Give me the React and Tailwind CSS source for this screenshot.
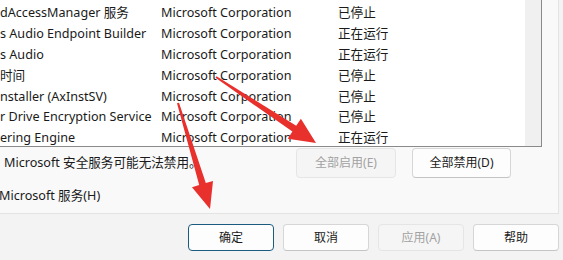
import React from "react";

const rows = [
  ["dAccessManager 服务", "Microsoft Corporation", "已停止"],
  ["s Audio Endpoint Builder", "Microsoft Corporation", "正在运行"],
  ["s Audio", "Microsoft Corporation", "正在运行"],
  ["时间", "Microsoft Corporation", "已停止"],
  ["nstaller (AxInstSV)", "Microsoft Corporation", "已停止"],
  ["r Drive Encryption Service", "Microsoft Corporation", "已停止"],
  ["ering Engine", "Microsoft Corporation", "正在运行"],
];

function Btn({ children, w = "w-[86px]", h = "h-[27px]", variant = "normal" }) {
  const base = `${w} ${h} flex items-center justify-center rounded-[4px] text-[12px] `;
  if (variant === "primary")
    return (
      <div className={base + "bg-[#fdfdfd] border border-[#1c5b80] text-[#1a1a1a]"}>{children}</div>
    );
  if (variant === "disabled")
    return (
      <div className={base + "bg-[#f5f5f5] border border-[#e5e5e5] text-[#a2a2a2]"}>{children}</div>
    );
  return (
    <div className={base + "bg-[#fdfdfd] border border-[#d6d6d6] border-b-[#c4c4c4] text-[#1a1a1a]"}>{children}</div>
  );
}

export default function App() {
  return (
    <div
      className="relative w-[563px] h-[260px] overflow-hidden bg-[#f3f3f3] text-[#1a1a1a]"
      style={{ fontFamily: '"Noto Sans", "Noto Sans CJK SC", sans-serif' }}
    >
      {/* tab panel */}
      <div className="w-[559px] h-[214px] bg-[#f9f9f9] border-r border-b border-[#e3e3e3] flex flex-col">
        {/* list */}
        <div className="w-[542px] h-[147px] bg-white border-r border-b border-[#8a8a8a] flex">
          <div className="flex-1 pt-[2.5px] overflow-hidden">
            {rows.map((r, i) => (
              <div key={i} className="h-[20.8px] flex items-center text-[12.6px] leading-[15px] whitespace-nowrap">
                <div className="w-[161px] shrink-0 overflow-hidden">{r[0]}</div>
                <div className="w-[177px] shrink-0 overflow-hidden">{r[1]}</div>
                <div className="flex-1">{r[2]}</div>
              </div>
            ))}
          </div>
          <div className="w-[16px] bg-[#f0f0f0]" />
        </div>
        {/* note + buttons */}
        <div className="flex items-center h-[30px] mt-[1px]">
          <div className="w-[296px] pl-[4px] text-[12.6px] whitespace-nowrap">Microsoft 安全服务可能无法禁用。</div>
          <Btn w="w-[100px]" h="h-[30px]" variant="disabled">全部启用(E)</Btn>
          <div className="w-[16px]" />
          <Btn w="w-[99px]" h="h-[30px]">全部禁用(D)</Btn>
        </div>
        <div className="mt-[8px] h-[20px] flex items-center text-[12.6px] -ml-[1px] whitespace-nowrap">Microsoft 服务(H)</div>
      </div>
      {/* bottom buttons */}
      <div className="flex justify-end gap-[9px] pr-[4px] mt-[10px]">
        <Btn variant="primary">确定</Btn>
        <Btn>取消</Btn>
        <Btn variant="disabled">应用(A)</Btn>
        <Btn>帮助</Btn>
      </div>
      {/* red arrows annotation */}
      <svg className="absolute left-0 top-0 pointer-events-none" width="563" height="260" viewBox="0 0 563 260">
        <polygon
          points="216.5,76.2 296.2,125.8 300.9,118.7 316,143 287.7,138.7 292.4,131.6 215.5,77.8"
          fill="#e8302c"
        />
        <polygon
          points="179,102.7 205.8,183.1 213,180.9 210,209 192,187.3 199.2,185.1 177,103.3"
          fill="#e8302c"
        />
      </svg>
    </div>
  );
}
